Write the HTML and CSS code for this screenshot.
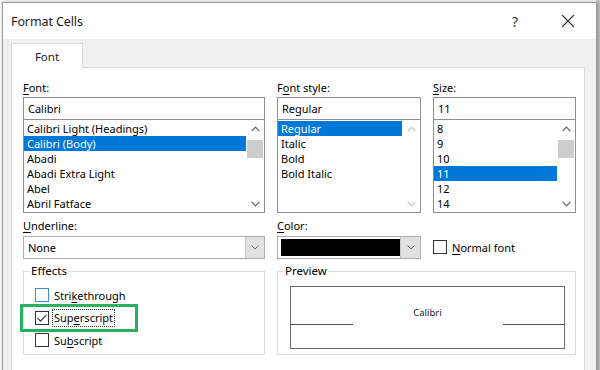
FILE: index.html
```html
<!DOCTYPE html>
<html>
<head>
<meta charset="utf-8">
<link rel="stylesheet" href="styles.css">
</head>
<body>
<div class="dialog">
  <div class="titlebar">
    <span class="title">Format Cells</span>
    <span class="help">?</span>
    <span class="close"><svg width="14" height="14" viewBox="0 0 14 14"><path d="M1 1 L13 13 M13 1 L1 13" stroke="#333" stroke-width="1.1" fill="none"/></svg></span>
  </div>
  <div class="tabs"><div class="tab">Font</div></div>
  <div class="page">
    <div class="grid">
      <div class="field">
        <div class="lbl"><u>F</u>ont:</div>
        <div class="input">Calibri</div>
        <div class="list">
          <div class="items">
            <div class="item">Calibri Light (Headings)</div>
            <div class="item sel">Calibri (Body)</div>
            <div class="item">Abadi</div>
            <div class="item">Abadi Extra Light</div>
            <div class="item">Abel</div>
            <div class="item">Abril Fatface</div>
          </div>
          <div class="scroll">
            <div class="sbtn"><svg width="9" height="6" viewBox="0 0 9 6"><path d="M0.7 5.2 L4.5 1.2 L8.3 5.2" stroke="#606060" stroke-width="1.2" fill="none"/></svg></div>
            <div class="track"><div class="thumb"></div></div>
            <div class="sbtn"><svg width="9" height="6" viewBox="0 0 9 6"><path d="M0.7 0.8 L4.5 4.8 L8.3 0.8" stroke="#606060" stroke-width="1.2" fill="none"/></svg></div>
          </div>
        </div>
      </div>
      <div class="field">
        <div class="lbl">F<u>o</u>nt style:</div>
        <div class="input">Regular</div>
        <div class="list">
          <div class="items">
            <div class="item sel">Regular</div>
            <div class="item">Italic</div>
            <div class="item">Bold</div>
            <div class="item">Bold Italic</div>
          </div>
          <div class="scroll">
            <div class="sbtn"><svg width="9" height="6" viewBox="0 0 9 6"><path d="M0.7 5.2 L4.5 1.2 L8.3 5.2" stroke="#c4c4c4" stroke-width="1.2" fill="none"/></svg></div>
            <div class="track"></div>
            <div class="sbtn"><svg width="9" height="6" viewBox="0 0 9 6"><path d="M0.7 0.8 L4.5 4.8 L8.3 0.8" stroke="#c4c4c4" stroke-width="1.2" fill="none"/></svg></div>
          </div>
        </div>
      </div>
      <div class="field">
        <div class="lbl"><u>S</u>ize:</div>
        <div class="input">11</div>
        <div class="list">
          <div class="items">
            <div class="item">8</div>
            <div class="item">9</div>
            <div class="item">10</div>
            <div class="item sel">11</div>
            <div class="item">12</div>
            <div class="item">14</div>
          </div>
          <div class="scroll">
            <div class="sbtn"><svg width="9" height="6" viewBox="0 0 9 6"><path d="M0.7 5.2 L4.5 1.2 L8.3 5.2" stroke="#606060" stroke-width="1.2" fill="none"/></svg></div>
            <div class="track"><div class="thumb"></div></div>
            <div class="sbtn"><svg width="9" height="6" viewBox="0 0 9 6"><path d="M0.7 0.8 L4.5 4.8 L8.3 0.8" stroke="#606060" stroke-width="1.2" fill="none"/></svg></div>
          </div>
        </div>
      </div>

      <div class="field row2">
        <div class="lbl"><u>U</u>nderline:</div>
        <div class="dropdown">
          <div class="dd-value">None</div>
          <div class="dd-btn"><svg width="8" height="5" viewBox="0 0 8 5"><path d="M0.6 0.6 L4 4 L7.4 0.6" stroke="#666" stroke-width="1" fill="none"/></svg></div>
        </div>
      </div>
      <div class="field row2">
        <div class="lbl"><u>C</u>olor:</div>
        <div class="dropdown">
          <div class="dd-value"><div class="swatch"></div></div>
          <div class="dd-btn wide"><svg width="8" height="5" viewBox="0 0 8 5"><path d="M0.6 0.6 L4 4 L7.4 0.6" stroke="#666" stroke-width="1" fill="none"/></svg></div>
        </div>
      </div>
      <div class="field row2 normal">
        <div class="check"><span class="cb"></span><span><u>N</u>ormal font</span></div>
      </div>

      <fieldset class="group">
        <legend>Effects</legend>
        <div class="effects">
          <div class="check"><span class="cb hover"></span><span>Stri<u>k</u>ethrough</span></div>
          <div class="check mark">
            <span class="cb"><svg width="12" height="12" viewBox="0 0 12 12"><path d="M1.5 6.2 L4.5 9.2 L10.5 2.8" stroke="#333" stroke-width="1.1" fill="none"/></svg></span>
            <span class="focus">Sup<u>e</u>rscript</span>
            <span class="highlight"></span>
          </div>
          <div class="check"><span class="cb"></span><span>Su<u>b</u>script</span></div>
        </div>
      </fieldset>
      <fieldset class="group preview">
        <legend>Preview</legend>
        <div class="pwrap">
          <div class="pbox">
            <div class="pline"></div>
            <div class="ptext">Calibri</div>
            <div class="pline"></div>
          </div>
        </div>
      </fieldset>
    </div>
  </div>
</div>
</body>
</html>
```
FILE: styles.css
```css
html, body {
  margin: 0;
  padding: 0;
}
body {
  width: 600px;
  height: 370px;
  overflow: hidden;
  background: linear-gradient(to right, #ffffff 0, #ffffff 596px, #c9c9c9 596px);
  font-family: "Noto Sans", "Open Sans", sans-serif;
  font-size: 11px;
  color: #000;
}
.dialog {
  margin: 2px 0 0 2px;
  width: 593px;
  height: 380px;
  border: 1px solid #9a9a9a;
  background: #f0f0f0;
  box-shadow: 1px 0 4px rgba(0,0,0,0.35);
}
.titlebar {
  height: 36px;
  background: #fff;
  display: flex;
  align-items: center;
  padding-left: 8px;
}
.title {
  font-size: 12.5px;
  color: #1a1a1a;
  flex: 1;
  letter-spacing: -0.1px;
}
.help {
  font-size: 14px;
  color: #333;
  width: 20px;
  margin-right: 36px;
  text-align: center;
}
.close {
  width: 14px;
  height: 14px;
  margin-right: 21px;
  display: flex;
}
.tabs {
  padding: 3px 0 0 8px;
  display: flex;
}
.tab {
  width: 70px;
  height: 24px;
  background: #fff;
  border: 1px solid #d9d9d9;
  border-bottom: none;
  display: flex;
  align-items: center;
  justify-content: center;
  font-size: 11.5px;
  color: #1a1a1a;
  position: relative;
  top: 1px;
}
.page {
  margin-left: 8px;
  width: 574px;
  height: 320px;
  background: #fff;
  border: 1px solid #d9d9d9;
  padding: 12px 0 0 11px;
  box-sizing: border-box;
}
.grid {
  display: grid;
  grid-template-columns: 242px 144px 143px;
  column-gap: 12px;
  align-items: start;
}
.field {
  display: flex;
  flex-direction: column;
}
.lbl {
  height: 17px;
  line-height: 16px;
}
u {
  text-decoration-thickness: 1px;
  text-underline-offset: 2px;
}
.input {
  height: 22px;
  box-sizing: border-box;
  border: 1px solid #8f8f8f;
  border-bottom: none;
  padding: 0 0 0 4px;
  line-height: 21px;
}
.list {
  height: 94px;
  box-sizing: border-box;
  border: 1px solid #8f8f8f;
  display: flex;
}
.items {
  flex: 1;
  padding: 1px 0 0 0;
}
.item {
  height: 15px;
  line-height: 15px;
  padding-left: 3px;
  white-space: nowrap;
}
.item.sel {
  background: #0078d7;
  color: #fff;
}
.scroll {
  width: 18px;
  display: flex;
  flex-direction: column;
  background: #fff;
}
.sbtn {
  height: 17px;
  display: flex;
  align-items: center;
  justify-content: center;
}
.track {
  flex: 1;
  padding: 3px 1px 0 1px;
}
.thumb {
  height: 18px;
  background: #cdcdcd;
}
.row2 {
  margin-top: 5px;
}
.lbl + .dropdown {
  margin-top: 1px;
}
.dropdown {
  height: 23px;
  box-sizing: border-box;
  border: 1px solid #adadad;
  display: flex;
  background: #fff;
}
.dd-value {
  flex: 1;
  padding-left: 4px;
  line-height: 21px;
  display: flex;
  align-items: center;
}
.swatch {
  width: 119px;
  height: 17px;
  background: #000;
  margin-left: -1px;
}
.dd-btn {
  width: 18px;
  background: #e1e1e1;
  border-left: 1px solid #c8c8c8;
  display: flex;
  align-items: center;
  justify-content: center;
}
.dd-btn.wide {
  width: 19px;
}
.normal {
  padding-top: 22px;
}
.check {
  display: flex;
  align-items: center;
  height: 14px;
  position: relative;
}
.cb {
  width: 14px;
  height: 14px;
  box-sizing: border-box;
  border: 1px solid #333;
  background: #fff;
  margin-right: 5px;
  display: flex;
  align-items: center;
  justify-content: center;
  flex: none;
}
.cb.hover {
  border-color: #3d8fd9;
}
.group {
  margin: 4px 0 0 0;
  padding: 0;
  border: 1px solid #dcdcdc;
  min-width: 0;
  height: 92px;
  box-sizing: border-box;
}
.group legend {
  padding: 0 1px;
  margin-left: 6px;
  line-height: 16px;
  height: 16px;
  font-size: 11.5px;
}
.effects {
  padding: 9px 0 0 11px;
  display: flex;
  flex-direction: column;
  gap: 8.5px;
}
.focus {
  border: 1px dotted #333;
  padding: 0 1px 1px 1px;
  margin-left: -2px;
  line-height: 15px;
}
.highlight {
  position: absolute;
  left: -15px;
  top: -7px;
  width: 118px;
  height: 28px;
  box-sizing: border-box;
  border: 3px solid #2aae62;
}
.preview {
  grid-column: 2 / 4;
}
.pwrap {
  padding: 7px 0 0 12px;
}
.pbox {
  width: 275px;
  height: 63px;
  box-sizing: border-box;
  border: 1px solid #6a6a6a;
  display: flex;
  align-items: flex-start;
}
.pline {
  flex: 1;
  margin-top: 37px;
  border-top: 1px solid #555;
}
.ptext {
  width: 150px;
  text-align: center;
  font-size: 9.5px;
  margin-top: 19px;
  color: #222;
}
```
